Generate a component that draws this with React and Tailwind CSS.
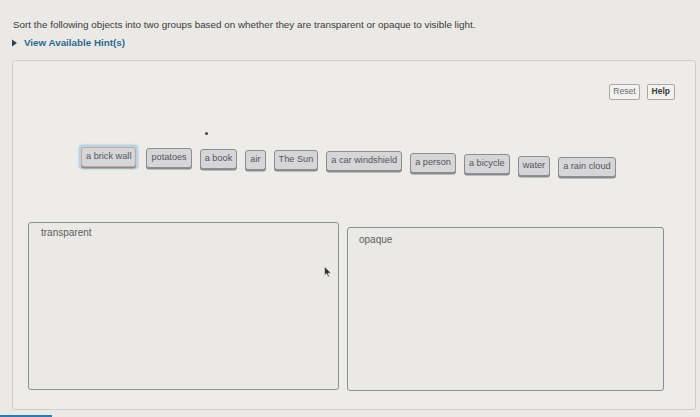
const ITEMS = [
  { label: "a brick wall", mt: "mt-[0px]", selected: true },
  { label: "potatoes", mt: "mt-[3px]" },
  { label: "a book", mt: "mt-[4px]" },
  { label: "air", mt: "mt-[5px]" },
  { label: "The Sun", mt: "mt-[5px]" },
  { label: "a car windshield", mt: "mt-[6px]" },
  { label: "a person", mt: "mt-[8px]" },
  { label: "a bicycle", mt: "mt-[9px]" },
  { label: "water", mt: "mt-[11px]" },
  { label: "a rain cloud", mt: "mt-[12px]" },
];

function Chip({ label, mt, selected }) {
  return (
    <div
      className={`${mt} rounded-[4px] ${
        selected ? "p-[2px] bg-[#b9d3ea] shadow-[0_0_2px_#8fb6da]" : ""
      }`}
    >
      <div
        className={`h-[20px] flex items-center px-[4px] rounded-[3px] border text-[9.2px] leading-none text-[#555558] bg-[#d6d6d9] shadow-[0_1.5px_0_#8a8a8e] ${
          selected ? "border-[#c9a98e]" : "border-[#8d8d92]"
        }`}
      >
        {label}
      </div>
    </div>
  );
}

export default function App() {
  return (
    <div
      className="relative h-[417px] w-[700px] overflow-hidden bg-[#ebe9e5] text-[#3a3a3a]"
      style={{ fontFamily: '"Liberation Sans", Arial, sans-serif' }}
    >
      <div className="pl-[13px] pt-[19px] text-[9.85px] leading-[12px] text-[#3b3b3b]">
        Sort the following objects into two groups based on whether they are transparent or opaque to visible light.
      </div>

      <div className="flex items-center gap-[6px] pl-[11px] mt-[5px] text-[#2c6a92] font-bold text-[9.8px]">
        <svg width="7" height="8" viewBox="0 0 7 8">
          <path d="M1 0.5 L6 4 L1 7.5 Z" fill="#2f4050" />
        </svg>
        <span>View Available Hint(s)</span>
      </div>

      <div className="relative ml-[12px] mt-[9px] w-[684px] h-[350px] rounded-[3px] border border-[#cfcdc9] bg-[#eeece8]">
        <div className="flex justify-end gap-[7px] pt-[23px] pr-[20px]">
          <button className="h-[16px] px-[3px] rounded-[2px] border border-[#a9a9ad] bg-[#f3f2ef] text-[8.5px] text-[#6a6a6e]">
            Reset
          </button>
          <button className="h-[16px] px-[4px] rounded-[2px] border border-[#a9a9ad] bg-[#f3f2ef] text-[8.5px] font-bold text-[#3c3c40]">
            Help
          </button>
        </div>

        <div className="flex items-start gap-[8px] pl-[66px] mt-[45px]">
          {ITEMS.map((it) => (
            <Chip key={it.label} {...it} />
          ))}
        </div>

        <div className="flex items-start gap-[8px] pl-[15px] mt-[45px]">
          <div className="w-[311px] h-[168px] rounded-[3px] border border-[#8e8e98] bg-[#ebe9e5] px-[12px] pt-[2px] text-[10px] text-[#5d5d60]">
            transparent
          </div>
          <div className="mt-[5px] w-[317px] h-[164px] rounded-[3px] border border-[#8e8e98] bg-[#ebe9e5] px-[11px] pt-[4px] text-[10px] text-[#5d5d60]">
            opaque
          </div>
        </div>

        <div className="absolute left-[192px] top-[71px] w-[3px] h-[3px] rounded-full bg-[#444]" />

        <svg
          className="absolute left-[311px] top-[205px]"
          width="8"
          height="12"
          viewBox="0 0 8 12"
        >
          <path d="M0.5 0.5 L0.5 9.5 L2.6 7.6 L4 11 L5.4 10.4 L4 7.2 L7 7.2 Z" fill="#333" stroke="#eee" strokeWidth="0.6" />
        </svg>
      </div>

      <div className="mt-[5px] w-[52px] h-[6px] bg-[#2d7bb1]" />
    </div>
  );
}
